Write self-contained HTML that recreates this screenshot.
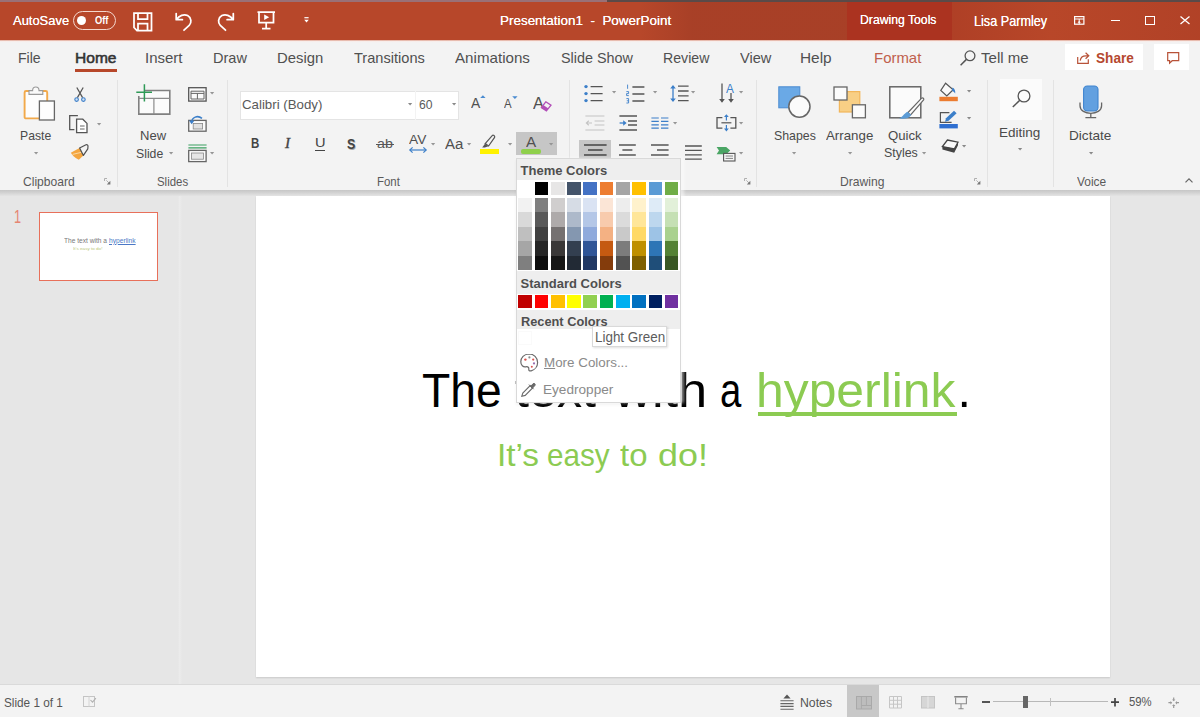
<!DOCTYPE html>
<html><head><meta charset="utf-8"><title>Presentation1 - PowerPoint</title>
<style>
*{margin:0;padding:0;box-sizing:border-box}
html,body{width:1200px;height:717px;overflow:hidden;background:#e6e6e6;font-family:"Liberation Sans",sans-serif;}
.a{position:absolute}
.t{position:absolute;white-space:pre;line-height:1;color:#444;transform-origin:0 0}
svg{overflow:visible}

</style></head><body>
<div class="a" style="left:0px;top:0px;width:1200px;height:40px;background:#b7472a;"></div>
<div class="a" style="left:640px;top:0px;width:210px;height:40px;background:linear-gradient(90deg,rgba(150,50,30,0) 0,rgba(150,55,35,.45) 25%,rgba(150,55,35,.45) 100%);"></div>
<div class="a" style="left:952px;top:0px;width:248px;height:40px;background:linear-gradient(90deg,rgba(160,50,30,.35),rgba(190,70,35,.15) 40%,rgba(160,50,30,.25));"></div>
<div class="a" style="left:847px;top:0px;width:105px;height:40px;background:#ab3320;"></div>
<div class="a" style="left:0px;top:0px;width:607px;height:1.5px;background:#9a7076;"></div>
<div class="a" style="left:607px;top:0px;width:593px;height:1.5px;background:#5a4a48;"></div>
<div class="t" style="left:13.40px;top:14.47px;font-size:13.5px;color:#fff;transform:scaleX(0.9581);text-shadow:0 0 .4px #fff;">AutoSave</div>
<div class="a" style="left:72.5px;top:11px;width:43.5px;height:19px;border:1.3px solid #f4d6cc;border-radius:10px"></div>
<div class="a" style="left:76.7px;top:15.6px;width:9.8px;height:9.8px;border-radius:50%;background:#fff"></div>
<div class="t" style="left:94.60px;top:15.11px;font-size:10.5px;color:#fff;font-weight:700;transform:scaleX(0.8874);">Off</div>
<svg class="a" style="left:133px;top:11.5px;" width="19.5" height="19.5" viewBox="0 0 19.5 19.5"><path d="M1 1h17.5v17.5H4L1 15.5z M5 1v6h9.5V1 M5 18.5v-7h9.5v7" fill="none" stroke="#fff" stroke-width="1.75"/></svg>
<svg class="a" style="left:175px;top:11.5px;" width="18" height="19" viewBox="0 0 18 19"><path d="M1.2 1.5v6.2h6.2 M1.6 7.4C4 3.6 9 1.6 12.6 3.6c4 2.2 4.2 7 1.6 9.8L9 18.2" fill="none" stroke="#fff" stroke-width="1.75" stroke-linecap="round" stroke-linejoin="round"/></svg>
<svg class="a" style="left:216px;top:11.5px;" width="18.5" height="19.5" viewBox="0 0 18.5 19.5"><path d="M17.3 1.5v6.2h-6.2 M16.9 7.4C14.5 3.6 9.5 1.6 5.9 3.6c-4 2.2-4.2 7-1.6 9.8l5.2 4.8" fill="none" stroke="#fff" stroke-width="1.75" stroke-linecap="round" stroke-linejoin="round"/></svg>
<svg class="a" style="left:257px;top:11px;" width="18.5" height="19" viewBox="0 0 18.5 19"><path d="M0.5 1h17.5 M2 1v10.5h14.5V1 M9.2 11.5v5.5 M5 17.5h8.5" fill="none" stroke="#fff" stroke-width="1.75"/><path d="M7.2 3.6l5 2.7-5 2.7z" fill="#fff"/></svg>
<svg class="a" style="left:303.8px;top:16.6px;" width="5" height="6" viewBox="0 0 5 6"><path d="M0.4 0.7h4.2" stroke="#fff" stroke-width="1.2"/><path d="M0.200 2.700l2.300 2.700 2.300-2.700z" fill="#fff"/></svg>
<div class="t" style="left:499.80px;top:13.66px;font-size:13.4px;color:#fff;transform:scaleX(1.0040);text-shadow:0 0 .3px #fff;">Presentation1  -  PowerPoint</div>
<div class="t" style="left:859.84px;top:14.25px;font-size:12.7px;color:#fff;transform:scaleX(0.9625);text-shadow:0 0 .3px #fff;">Drawing Tools</div>
<div class="t" style="left:974.11px;top:14.28px;font-size:14.2px;color:#fff;transform:scaleX(0.8913);text-shadow:0 0 .5px #fff;">Lisa Parmley</div>
<svg class="a" style="left:1074px;top:16px;" width="10.5" height="9" viewBox="0 0 10.5 9"><rect x="0.6" y="0.6" width="9.3" height="7.6" fill="none" stroke="#fff" stroke-width="1.2"/><path d="M0.6 3h9.3 M5.2 3v5.2" stroke="#fff" stroke-width="1"/><path d="M3.6 6.8l1.6-2 1.6 2z" fill="#fff"/></svg>
<div class="a" style="left:1110.5px;top:19.6px;width:9.5px;height:1.2px;background:#fff;"></div>
<div class="a" style="left:1145px;top:16px;width:9.6px;height:8.8px;border:1.3px solid #fff"></div>
<svg class="a" style="left:1180px;top:16.2px;" width="10" height="8.4" viewBox="0 0 10 8.4"><path d="M0.5 0.5l9 7.4 M9.5 0.5l-9 7.4" stroke="#fff" stroke-width="1.3"/></svg>
<div class="a" style="left:0px;top:40px;width:1200px;height:35px;background:#f3f3f3;"></div>
<div class="a" style="left:0px;top:39.6px;width:1200px;height:3px;background:linear-gradient(#d9917c,#f8ebe7 35%,#f5f1f1 70%,#f3f3f3);"></div>
<div class="t" style="left:17.75px;top:50.57px;font-size:14.8px;color:#505050;transform:scaleX(0.9508);">File</div>
<div class="t" style="left:74.75px;top:50.57px;font-size:14.8px;color:#333;transform:scaleX(1.0512);-webkit-text-stroke:.55px #333;">Home</div>
<div class="a" style="left:75.3px;top:68.6px;width:41.4px;height:3px;background:#b7472a;"></div>
<div class="t" style="left:144.99px;top:50.57px;font-size:14.8px;color:#505050;transform:scaleX(1.0141);">Insert</div>
<div class="t" style="left:212.82px;top:50.57px;font-size:14.8px;color:#505050;transform:scaleX(0.9810);">Draw</div>
<div class="t" style="left:276.50px;top:50.57px;font-size:14.8px;color:#505050;transform:scaleX(1.0038);">Design</div>
<div class="t" style="left:353.80px;top:50.57px;font-size:14.8px;color:#505050;transform:scaleX(0.9857);">Transitions</div>
<div class="t" style="left:455.00px;top:50.57px;font-size:14.8px;color:#505050;transform:scaleX(1.0234);">Animations</div>
<div class="t" style="left:560.80px;top:50.57px;font-size:14.8px;color:#505050;transform:scaleX(0.9712);">Slide Show</div>
<div class="t" style="left:662.84px;top:50.57px;font-size:14.8px;color:#505050;transform:scaleX(0.9555);">Review</div>
<div class="t" style="left:739.50px;top:50.57px;font-size:14.8px;color:#505050;transform:scaleX(0.9870);">View</div>
<div class="t" style="left:799.76px;top:50.57px;font-size:14.8px;color:#505050;transform:scaleX(1.0410);">Help</div>
<div class="t" style="left:873.99px;top:50.57px;font-size:14.8px;color:#c0604c;transform:scaleX(1.0098);">Format</div>
<svg class="a" style="left:959.5px;top:50px;" width="16" height="16" viewBox="0 0 16 16"><circle cx="10" cy="5.8" r="4.9" fill="none" stroke="#555" stroke-width="1.3"/><path d="M6.4 9.4L0.6 15.2" stroke="#555" stroke-width="1.5"/></svg>
<div class="t" style="left:981.00px;top:50.57px;font-size:14.8px;color:#505050;transform:scaleX(1.0163);">Tell me</div>
<div class="a" style="left:1065px;top:44px;width:78px;height:26px;background:#fff;"></div>
<svg class="a" style="left:1077px;top:52px;" width="13" height="12" viewBox="0 0 13 12"><path d="M0.7 5v6.3h10.6V7.2 M3.2 8.6c0.4-3 2.6-4.8 5.6-4.8h2.6 M8.6 0.8l3.2 3-3.2 3" fill="none" stroke="#b85238" stroke-width="1.2"/></svg>
<div class="t" style="left:1096.00px;top:50.57px;font-size:14.8px;color:#b5492f;font-weight:700;transform:scaleX(0.9194);">Share</div>
<div class="a" style="left:1154px;top:44px;width:34.5px;height:26px;background:#fff;"></div>
<svg class="a" style="left:1167px;top:51.5px;" width="12.5" height="12" viewBox="0 0 12.5 12"><path d="M0.7 0.7h11v8H5.2L2.6 11.2V8.7H0.7z" fill="none" stroke="#b85238" stroke-width="1.2"/></svg>
<div class="a" style="left:0px;top:75px;width:1200px;height:115px;background:#f3f3f3;"></div>
<div class="a" style="left:0px;top:190px;width:1200px;height:6px;background:linear-gradient(#c6c6c6,#d4d4d4 50%,#e4e4e4);"></div>
<div class="a" style="left:117px;top:80px;width:1px;height:107px;background:#e3e3e3;"></div>
<div class="a" style="left:227px;top:80px;width:1px;height:107px;background:#e3e3e3;"></div>
<div class="a" style="left:569px;top:80px;width:1px;height:107px;background:#e3e3e3;"></div>
<div class="a" style="left:756px;top:80px;width:1px;height:107px;background:#e3e3e3;"></div>
<div class="a" style="left:987px;top:80px;width:1px;height:107px;background:#e3e3e3;"></div>
<div class="a" style="left:1053px;top:80px;width:1px;height:107px;background:#e3e3e3;"></div>
<svg class="a" style="left:23px;top:85.5px;" width="33" height="35" viewBox="0 0 33 35"><rect x="1.600" y="5" width="22.600" height="27.400" rx="1.500" fill="#fdfdfd" stroke="#f2a94a" stroke-width="1.900"/>
<path d="M6 8.400V4.600h3.600c0-4.800 6.400-4.800 6.400 0h3.800v3.800z" fill="#fafafa" stroke="#9a9a9a" stroke-width="1.100"/>
<rect x="16.400" y="15" width="15" height="19" fill="#fdfdfd" stroke="#666" stroke-width="1.300"/></svg>
<div class="t" style="left:20.33px;top:129.63px;font-size:12.6px;color:#4a4a4a;transform:scaleX(0.9680);">Paste</div>
<svg class="a" style="left:33.9px;top:152.4px;" width="4.2" height="2.6" viewBox="0 0 4.2 2.6"><path d="M0 0h4.2L2.1 2.5z" fill="#959595"/></svg>
<svg class="a" style="left:73.5px;top:87px;" width="12" height="16" viewBox="0 0 12 16"><path d="M2.800 0.500L8.600 10.600 M9.200 0.500L3.400 10.600" stroke="#555" stroke-width="1.250" fill="none"/>
<circle cx="2.600" cy="12.600" r="1.800" fill="#cfe0f4" stroke="#3c7fc9" stroke-width="1.100"/><circle cx="9.400" cy="12.600" r="1.800" fill="#cfe0f4" stroke="#3c7fc9" stroke-width="1.100"/></svg>
<svg class="a" style="left:69px;top:114.5px;" width="19" height="18.5" viewBox="0 0 19 18.5"><path d="M5.4 14.6H0.7V0.7h8.2" fill="none" stroke="#555" stroke-width="1.3"/>
<path d="M7.6 4.2h6.2l4.2 4.2v9.3H7.6z" fill="#fff" stroke="#555" stroke-width="1.3"/><path d="M11 11h4.6 M11 14h4.6" stroke="#666" stroke-width="1"/></svg>
<svg class="a" style="left:96.60000000000001px;top:122.5px;" width="4.2" height="2.6" viewBox="0 0 4.2 2.6"><path d="M0 0h4.2L2.1 2.5z" fill="#959595"/></svg>
<svg class="a" style="left:70px;top:144px;" width="19" height="17" viewBox="0 0 19 17"><path d="M0.8 8.8L10 3.8l3.400 7.600-4.600 4.400C5 14 2 11 0.800 8.800z" fill="#f4a640"/><path d="M2.600 10.400l9.400-2.200" stroke="#fbd9a4" stroke-width="1"/>
<path d="M9.600 4l6.400-3.200c1.200-0.400 2 0.400 2 1.400l-0.200 2.600-4.400 6.600z" fill="#f3f3f3" stroke="#505050" stroke-width="1.200" stroke-linejoin="round"/></svg>
<div class="t" style="left:23.00px;top:175.80px;font-size:12.4px;color:#5a5a5a;transform:scaleX(0.9747);">Clipboard</div>
<svg class="a" style="left:103.8px;top:177.8px;" width="7" height="7" viewBox="0 0 7 7"><path d="M0.500 3V0.500h2.500 M2.400 2.400l3.400 3.400" fill="none" stroke="#a8a8a8" stroke-width="0.900"/><path d="M6.400 2.800v3.600H2.800z" fill="#777"/></svg>
<svg class="a" style="left:136px;top:83.5px;" width="35" height="32" viewBox="0 0 35 32"><path d="M8.400 6.500h25.400v23.600H2.800V12" fill="#fbfbfb" stroke="#808080" stroke-width="1.600"/>
<path d="M2.800 14.400h31 M17.900 14.400v15.600" stroke="#8c8c8c" stroke-width="1.200"/>
<path d="M8.400 0.200v17.400 M0.300 8.300h15.700" stroke="#2e9a57" stroke-width="1.500"/></svg>
<div class="t" style="left:140.36px;top:129.63px;font-size:12.6px;color:#4a4a4a;transform:scaleX(1.0359);">New</div>
<div class="t" style="left:136.00px;top:147.63px;font-size:12.6px;color:#4a4a4a;transform:scaleX(0.9714);">Slide</div>
<svg class="a" style="left:168.6px;top:152.1px;" width="4.2" height="2.6" viewBox="0 0 4.2 2.6"><path d="M0 0h4.2L2.1 2.5z" fill="#959595"/></svg>
<div class="t" style="left:156.50px;top:175.80px;font-size:12.4px;color:#5a5a5a;transform:scaleX(0.9210);">Slides</div>
<svg class="a" style="left:188px;top:86.5px;" width="19" height="15" viewBox="0 0 19 15"><rect x="0.7" y="0.7" width="17.4" height="13.4" fill="#fbfbfb" stroke="#555" stroke-width="1.3"/><path d="M3 4.2h13 M3 6.4h13 M9.4 6.4v5.6 M3 12h13 M3 4.2v7.8 M16 4.2v7.8" stroke="#666" stroke-width="1" fill="none"/></svg>
<svg class="a" style="left:210.20000000000002px;top:92.10000000000001px;" width="4.2" height="2.6" viewBox="0 0 4.2 2.6"><path d="M0 0h4.2L2.1 2.5z" fill="#959595"/></svg>
<svg class="a" style="left:188px;top:113.5px;" width="19" height="18" viewBox="0 0 19 18"><rect x="0.7" y="6.4" width="17.4" height="10.8" fill="#fbfbfb" stroke="#666" stroke-width="1.3"/><rect x="5.2" y="9.4" width="9.4" height="5.6" fill="#e1e1e1" stroke="#888" stroke-width="0.8"/>
<path d="M3.6 8.4C3.8 3.2 9.6 0.8 14 4.4" fill="none" stroke="#3c7fc9" stroke-width="1.5"/><path d="M1 6.6l2.6 3.6 2.8-3.4z" fill="#3c7fc9"/></svg>
<svg class="a" style="left:188px;top:144px;" width="19" height="18.5" viewBox="0 0 19 18.5"><path d="M0.4 1h18.2 M0.4 3.8h18.2" stroke="#3aa060" stroke-width="1.2"/><rect x="0.7" y="6.4" width="17.4" height="11.2" fill="#fbfbfb" stroke="#666" stroke-width="1.3"/><rect x="3.4" y="9" width="12" height="6.2" fill="#e6e6e6" stroke="#888" stroke-width="0.8"/></svg>
<svg class="a" style="left:210.20000000000002px;top:152.1px;" width="4.2" height="2.6" viewBox="0 0 4.2 2.6"><path d="M0 0h4.2L2.1 2.5z" fill="#959595"/></svg>
<div class="a" style="left:240px;top:90.5px;width:174.5px;height:29px;background:#fff;border:1px solid #e4e4e4;border-right:0"></div>
<div class="a" style="left:415.5px;top:90.5px;width:43.5px;height:29px;background:#fff;border:1px solid #e4e4e4;border-left:0"></div>
<div class="t" style="left:241.80px;top:98.42px;font-size:13.2px;color:#5a5a5a;transform:scaleX(1.0065);">Calibri (Body)</div>
<svg class="a" style="left:407.9px;top:102.7px;" width="4.2" height="2.6" viewBox="0 0 4.2 2.6"><path d="M0 0h4.2L2.1 2.5z" fill="#888"/></svg>
<div class="t" style="left:418.60px;top:98.42px;font-size:13.2px;color:#5a5a5a;transform:scaleX(0.9209);">60</div>
<svg class="a" style="left:452.29999999999995px;top:102.7px;" width="4.2" height="2.6" viewBox="0 0 4.2 2.6"><path d="M0 0h4.2L2.1 2.5z" fill="#888"/></svg>
<div class="t" style="left:471.00px;top:95.64px;font-size:14.6px;color:#505050;transform:scaleX(0.9500);">A</div>
<svg class="a" style="left:480.4px;top:95.3px;" width="5.8" height="3.2" viewBox="0 0 5.8 3.2"><path d="M0.200 3L2.900 0.200 5.600 3z" fill="#4a8bd0"/></svg>
<div class="t" style="left:503.80px;top:97.84px;font-size:12px;color:#505050;transform:scaleX(0.9500);">A</div>
<svg class="a" style="left:512.4px;top:96px;" width="5.8" height="3.2" viewBox="0 0 5.8 3.2"><path d="M0.200 0.200L2.900 3 5.600 0.200z" fill="#4a8bd0"/></svg>
<div class="t" style="left:533.00px;top:95.01px;font-size:17px;color:#505050;transform:scaleX(0.9583);">A</div>
<svg class="a" style="left:541px;top:101px;" width="11" height="10.5" viewBox="0 0 11 10.5"><path d="M4.8 0.8l5.2 3.4-4.6 5.6-5-3.2z" fill="#f3f3f3" stroke="#b24fb8" stroke-width="1.3"/><path d="M2.6 4.2l4.8 3.2-2 2.4-5-3.2z" fill="#b24fb8"/></svg>
<div class="t" style="left:251.20px;top:135.91px;font-size:14.4px;color:#444;font-weight:700;transform:scaleX(0.8000);">B</div>
<div class="t" style="left:285.03px;top:135.57px;font-size:14.8px;color:#444;font-style:italic;font-family:'Liberation Serif',serif;transform:scaleX(1.0286);-webkit-text-stroke:.35px #444;">I</div>
<div class="t" style="left:314.53px;top:136.29px;font-size:13.6px;color:#444;transform:scaleX(1.0750);">U</div>
<div class="a" style="left:315.2px;top:150px;width:9.4px;height:1.1px;background:#444;"></div>
<div class="t" style="left:347.30px;top:135.70px;font-size:15px;color:#444;font-weight:700;transform:scaleX(0.8300);text-shadow:0.9px 0.7px 0.7px #aaa;">S</div>
<div class="t" style="left:377.40px;top:137.53px;font-size:12.6px;color:#555;transform:scaleX(1.1282);">ab</div>
<div class="a" style="left:376.4px;top:144.2px;width:17.8px;height:1px;background:#555;"></div>
<div class="t" style="left:409.40px;top:133.09px;font-size:13.6px;color:#505050;transform:scaleX(1.0084);">AV</div>
<svg class="a" style="left:409px;top:146.5px;" width="18" height="6" viewBox="0 0 18 6"><path d="M1 3h16" stroke="#3c7fc9" stroke-width="1.2"/><path d="M3.6 0.4L0.8 3l2.8 2.6 M14.4 0.4L17.2 3l-2.8 2.6" fill="none" stroke="#3c7fc9" stroke-width="1.2"/></svg>
<svg class="a" style="left:431.4px;top:142.5px;" width="4.2" height="2.6" viewBox="0 0 4.2 2.6"><path d="M0 0h4.2L2.1 2.5z" fill="#959595"/></svg>
<div class="t" style="left:445.20px;top:136.36px;font-size:15.4px;color:#505050;transform:scaleX(0.9758);">Aa</div>
<svg class="a" style="left:467.2px;top:142.5px;" width="4.2" height="2.6" viewBox="0 0 4.2 2.6"><path d="M0 0h4.2L2.1 2.5z" fill="#959595"/></svg>
<svg class="a" style="left:480px;top:134px;" width="20" height="14" viewBox="0 0 20 14"><path d="M5.2 9.6l7-8c1-1 3 0.4 2.4 1.8l-6 8.6z" fill="#f3f3f3" stroke="#555" stroke-width="1.2"/><path d="M5 9.8l3.4 2.4-3.6 1.2H2.2z" fill="#555"/></svg>
<div class="a" style="left:480.2px;top:148.6px;width:18.4px;height:5px;background:#fff200;"></div>
<svg class="a" style="left:507.5px;top:142.5px;" width="4.2" height="2.6" viewBox="0 0 4.2 2.6"><path d="M0 0h4.2L2.1 2.5z" fill="#959595"/></svg>
<div class="a" style="left:516.4px;top:131.6px;width:41px;height:23.8px;background:#c6c6c6;"></div>
<div class="t" style="left:526.40px;top:134.30px;font-size:15px;color:#505050;transform:scaleX(1.0200);">A</div>
<div class="a" style="left:521.4px;top:148.6px;width:20px;height:5px;background:#8fd04c;border-radius:2px"></div>
<svg class="a" style="left:548.5px;top:142.5px;" width="4.2" height="2.6" viewBox="0 0 4.2 2.6"><path d="M0 0h4.2L2.1 2.5z" fill="#959595"/></svg>
<div class="t" style="left:376.58px;top:175.80px;font-size:12.4px;color:#5a5a5a;transform:scaleX(0.9240);">Font</div>
<svg class="a" style="left:584px;top:84px;" width="20" height="19" viewBox="0 0 20 19"><circle cx="2" cy="2.6" r="1.7" fill="#3c7fc9"/><circle cx="2" cy="9.6" r="1.7" fill="#3c7fc9"/><circle cx="2" cy="16.6" r="1.7" fill="#3c7fc9"/><path d="M6.6 2.6h12 M6.6 9.6h12 M6.6 16.6h12" stroke="#555" stroke-width="1.3"/></svg>
<svg class="a" style="left:611.8px;top:90.9px;" width="4.2" height="2.6" viewBox="0 0 4.2 2.6"><path d="M0 0h4.2L2.1 2.5z" fill="#959595"/></svg>
<svg class="a" style="left:626px;top:83.5px;" width="20" height="20" viewBox="0 0 20 20"><path d="M1.6 0.6v4.2 M0.4 7.6h2.2v2h-2v2h2.2 M0.4 14.6h2.2v4.4H0.4 M0.8 16.8h1.8" stroke="#3c7fc9" stroke-width="0.9" fill="none"/><path d="M6.4 3h12 M6.4 10h12 M6.4 17h12" stroke="#555" stroke-width="1.3"/></svg>
<svg class="a" style="left:653.3px;top:90.9px;" width="4.2" height="2.6" viewBox="0 0 4.2 2.6"><path d="M0 0h4.2L2.1 2.5z" fill="#959595"/></svg>
<svg class="a" style="left:669.5px;top:84px;" width="20" height="19" viewBox="0 0 20 19"><path d="M3 2v15" stroke="#3c7fc9" stroke-width="1.3"/><path d="M0.2 4.4L3 1l2.8 3.4z M0.2 14.6L3 18l2.8-3.4z" fill="#3c7fc9"/><path d="M8 2.2h10.6 M8 7h10.6 M8 11.8h10.6 M8 16.6h10.6" stroke="#555" stroke-width="1.3"/></svg>
<svg class="a" style="left:691.3px;top:90.9px;" width="4.2" height="2.6" viewBox="0 0 4.2 2.6"><path d="M0 0h4.2L2.1 2.5z" fill="#959595"/></svg>
<svg class="a" style="left:718.5px;top:83px;" width="16" height="21" viewBox="0 0 16 21"><path d="M3 0.6v18" stroke="#555" stroke-width="1.3"/><path d="M0.2 16L3 19.8 5.8 16z" fill="#555"/><path d="M12 10v8" stroke="#555" stroke-width="1.3"/><path d="M9.2 16L12 19.8 14.8 16z" fill="#555"/></svg>
<div class="t" style="left:726.40px;top:83.10px;font-size:12.4px;color:#3c7fc9;transform:scaleX(0.9556);">A</div>
<svg class="a" style="left:738.6999999999999px;top:90.9px;" width="4.2" height="2.6" viewBox="0 0 4.2 2.6"><path d="M0 0h4.2L2.1 2.5z" fill="#959595"/></svg>
<svg class="a" style="left:585px;top:114.5px;" width="20" height="16" viewBox="0 0 20 16"><path d="M0.4 1h19 M9.6 6h9.8 M9.6 10h9.8 M0.4 15h19" stroke="#c4c4c4" stroke-width="1.2"/><path d="M7 8H1.6 M3.8 5.8L1.4 8l2.4 2.2" stroke="#c4c4c4" stroke-width="1.2" fill="none"/></svg>
<svg class="a" style="left:619px;top:114.5px;" width="19" height="16" viewBox="0 0 19 16"><path d="M0.4 1h17.6 M9 6h9 M9 10h9 M0.4 15h17.6" stroke="#555" stroke-width="1.3"/><path d="M0.6 8h5" stroke="#3c7fc9" stroke-width="1.3"/><path d="M4.2 5.2L7.6 8 4.2 10.8z" fill="#3c7fc9"/></svg>
<svg class="a" style="left:651px;top:117px;" width="18" height="12" viewBox="0 0 18 12"><path d="M0.4 1h7.4 M0.4 4.4h7.4 M0.4 7.8h7.4 M0.4 11.2h7.4 M10 1h7.4 M10 4.4h7.4 M10 7.8h7.4 M10 11.2h7.4" stroke="#3c7fc9" stroke-width="1.2"/></svg>
<svg class="a" style="left:673.4px;top:121.9px;" width="4.2" height="2.6" viewBox="0 0 4.2 2.6"><path d="M0 0h4.2L2.1 2.5z" fill="#959595"/></svg>
<svg class="a" style="left:715.5px;top:114px;" width="21" height="17.5" viewBox="0 0 21 17.5"><path d="M6.4 3.6H1v10.6h5.4 M14.4 3.6h5.4v10.6h-5.4" fill="none" stroke="#555" stroke-width="1.3"/><path d="M5.4 8.8h10" stroke="#555" stroke-width="1.2"/><path d="M10.4 1.6v5 M10.4 11v5" stroke="#3c7fc9" stroke-width="1.2"/><path d="M8 3L10.4 0.2 12.8 3z M8 14.6l2.4 2.8 2.4-2.8z" fill="#3c7fc9"/></svg>
<svg class="a" style="left:738.6999999999999px;top:121.9px;" width="4.2" height="2.6" viewBox="0 0 4.2 2.6"><path d="M0 0h4.2L2.1 2.5z" fill="#959595"/></svg>
<div class="a" style="left:579px;top:140px;width:32px;height:18px;background:#c6c6c6;"></div>
<svg class="a" style="left:584.3px;top:143.5px;" width="30" height="22" viewBox="0 0 30 22"><path d="M0 1H22.6 M4 6H18.6 M0 11H22.6" stroke="#444" stroke-width="1.4" fill="none"/></svg>
<svg class="a" style="left:619.4px;top:143.5px;" width="30" height="22" viewBox="0 0 30 22"><path d="M0 1H16.8 M3.4 6H13.4 M0 11H16.8" stroke="#555" stroke-width="1.3" fill="none"/></svg>
<svg class="a" style="left:651.2px;top:143.5px;" width="30" height="22" viewBox="0 0 30 22"><path d="M0 1H17.6 M6 6H17.6 M0 11H17.6" stroke="#555" stroke-width="1.3" fill="none"/></svg>
<svg class="a" style="left:684.7px;top:144.5px;" width="30" height="22" viewBox="0 0 30 22"><path d="M0 1H16.8 M0 5.4H16.8 M0 9.8H16.8 M0 14.2H16.8" stroke="#555" stroke-width="1.3" fill="none"/></svg>
<svg class="a" style="left:715.5px;top:145.5px;" width="20" height="16" viewBox="0 0 20 16"><path d="M0.6 1h9.6l4 3.6-4 3.6H0.6l2.4-3.6z" fill="#4aa564"/><rect x="7.6" y="7.4" width="11.4" height="7.6" fill="#f6f6f6" stroke="#555" stroke-width="1.1"/><path d="M9.6 10h7.4 M9.6 12.4h7.4" stroke="#777" stroke-width="0.9"/></svg>
<svg class="a" style="left:738.6999999999999px;top:151.9px;" width="4.2" height="2.6" viewBox="0 0 4.2 2.6"><path d="M0 0h4.2L2.1 2.5z" fill="#959595"/></svg>
<svg class="a" style="left:743.5px;top:177.60000000000002px;" width="7" height="7" viewBox="0 0 7 7"><path d="M0.500 3V0.500h2.500 M2.400 2.400l3.400 3.400" fill="none" stroke="#a8a8a8" stroke-width="0.900"/><path d="M6.400 2.800v3.600H2.800z" fill="#777"/></svg>
<svg class="a" style="left:778px;top:85.5px;" width="34" height="33" viewBox="0 0 34 33"><rect x="0.8" y="0.8" width="21" height="21" fill="#6aa9e6" stroke="#4a8bd0" stroke-width="1"/><circle cx="21.4" cy="20.6" r="10.6" fill="#fbfbfb" stroke="#666" stroke-width="1.5"/></svg>
<div class="t" style="left:774.00px;top:129.53px;font-size:12.6px;color:#4a4a4a;transform:scaleX(0.9808);">Shapes</div>
<svg class="a" style="left:792.3px;top:151.9px;" width="4.2" height="2.6" viewBox="0 0 4.2 2.6"><path d="M0 0h4.2L2.1 2.5z" fill="#959595"/></svg>
<svg class="a" style="left:833px;top:85.5px;" width="34" height="33" viewBox="0 0 34 33"><rect x="6.4" y="5.6" width="20.4" height="20.4" fill="#f8cf85" stroke="#f2b65a" stroke-width="1.2"/><rect x="1" y="1" width="13" height="13" fill="#fbfbfb" stroke="#666" stroke-width="1.3"/><rect x="19.4" y="18.8" width="13" height="13" fill="#fbfbfb" stroke="#666" stroke-width="1.3"/></svg>
<div class="t" style="left:826.20px;top:129.53px;font-size:12.6px;color:#4a4a4a;transform:scaleX(1.0558);">Arrange</div>
<svg class="a" style="left:847.9px;top:151.9px;" width="4.2" height="2.6" viewBox="0 0 4.2 2.6"><path d="M0 0h4.2L2.1 2.5z" fill="#959595"/></svg>
<svg class="a" style="left:889px;top:85.5px;" width="36" height="36" viewBox="0 0 36 36"><rect x="0.800" y="0.800" width="31" height="31" fill="#fbfbfb" stroke="#666" stroke-width="1.500"/><path d="M32.600 12.200c1.200-1 2.800 0.400 2 1.800L21.600 29l-2.800-2.200z" fill="#fbfbfb" stroke="#666" stroke-width="1.200"/><path d="M18.400 25.800l3.800 3c-1.600 3.600-7.200 5-12.200 3.400 3.800-0.800 4.800-4.600 8.400-6.400z" fill="#5b9bd5"/></svg>
<div class="t" style="left:888.00px;top:129.53px;font-size:12.6px;color:#4a4a4a;transform:scaleX(1.0458);">Quick</div>
<div class="t" style="left:883.90px;top:147.33px;font-size:12.6px;color:#4a4a4a;transform:scaleX(0.9854);">Styles</div>
<svg class="a" style="left:922.1px;top:151.9px;" width="4.2" height="2.6" viewBox="0 0 4.2 2.6"><path d="M0 0h4.2L2.1 2.5z" fill="#959595"/></svg>
<div class="t" style="left:840.22px;top:175.80px;font-size:12.4px;color:#5a5a5a;transform:scaleX(0.9763);">Drawing</div>
<svg class="a" style="left:939px;top:82px;" width="20" height="20" viewBox="0 0 20 20"><path d="M6.6 1.2l7.6 6.6-6.4 6.2-6-5.6z" fill="#f9f9f9" stroke="#555" stroke-width="1.2"/><path d="M13.6 5.4c2 1.2 3 3.400 2.600 6.200-1.400-2.200-2.600-2.400-3.400-3.400z" fill="#3c7fc9"/><rect x="0.400" y="14.800" width="18.400" height="4.400" fill="#ec7c30"/></svg>
<svg class="a" style="left:967.4px;top:89.9px;" width="4.2" height="2.6" viewBox="0 0 4.2 2.6"><path d="M0 0h4.2L2.1 2.5z" fill="#888"/></svg>
<svg class="a" style="left:939px;top:109.5px;" width="20" height="19" viewBox="0 0 20 19"><path d="M12.600 12.400H1.400V2.600h9" fill="none" stroke="#555" stroke-width="1.200"/><path d="M6 11.800l1-3.600L15 0.800l2.600 2.400-8 7.600z" fill="#3c7fc9"/><rect x="0.400" y="14" width="18.400" height="4.400" fill="#2f6fd0"/></svg>
<svg class="a" style="left:967.4px;top:116.9px;" width="4.2" height="2.6" viewBox="0 0 4.2 2.6"><path d="M0 0h4.2L2.1 2.5z" fill="#888"/></svg>
<svg class="a" style="left:940.5px;top:139px;" width="18" height="14.5" viewBox="0 0 18 14.5"><path d="M6.400 1L17 3.200l-3.600 6.600L1.400 7.600z" fill="#f9f9f9" stroke="#444" stroke-width="1.300"/><path d="M1.400 7.600v3l11.800 3.200 0.200-4z M13.400 9.800L17 3.200v3l-3.800 7.600z" fill="#444"/></svg>
<svg class="a" style="left:962.3px;top:144.70000000000002px;" width="4.2" height="2.6" viewBox="0 0 4.2 2.6"><path d="M0 0h4.2L2.1 2.5z" fill="#888"/></svg>
<svg class="a" style="left:974.3px;top:177.8px;" width="7" height="7" viewBox="0 0 7 7"><path d="M0.500 3V0.500h2.500 M2.400 2.400l3.400 3.400" fill="none" stroke="#a8a8a8" stroke-width="0.900"/><path d="M6.400 2.800v3.600H2.800z" fill="#777"/></svg>
<div class="a" style="left:1000px;top:79px;width:41.5px;height:40.5px;background:#fbfbfb;"></div>
<svg class="a" style="left:1011.5px;top:89px;" width="19" height="19" viewBox="0 0 19 19"><circle cx="12" cy="7" r="5.900" fill="none" stroke="#555" stroke-width="1.300"/><path d="M7.800 11.200L0.800 18" stroke="#555" stroke-width="1.500"/></svg>
<div class="t" style="left:999.23px;top:126.53px;font-size:12.6px;color:#4a4a4a;transform:scaleX(1.0719);">Editing</div>
<svg class="a" style="left:1017.9px;top:147.70000000000002px;" width="4.2" height="2.6" viewBox="0 0 4.2 2.6"><path d="M0 0h4.2L2.1 2.5z" fill="#888"/></svg>
<svg class="a" style="left:1079px;top:85px;" width="24" height="34" viewBox="0 0 24 34"><rect x="4.600" y="1" width="14.400" height="25" rx="3.600" fill="#62a0e0" stroke="#3f84cf" stroke-width="1.100"/><path d="M1 17.400v3.400c0 10 21.600 10 21.600 0v-3.400" fill="none" stroke="#666" stroke-width="1.300"/><path d="M11.800 28.400v4 M6.400 32.600h10.800" stroke="#666" stroke-width="1.300"/></svg>
<div class="t" style="left:1069.22px;top:129.63px;font-size:12.6px;color:#4a4a4a;transform:scaleX(1.0814);">Dictate</div>
<svg class="a" style="left:1088.6000000000001px;top:151.9px;" width="4.2" height="2.6" viewBox="0 0 4.2 2.6"><path d="M0 0h4.2L2.1 2.5z" fill="#888"/></svg>
<div class="t" style="left:1076.50px;top:175.80px;font-size:12.4px;color:#5a5a5a;transform:scaleX(0.9632);">Voice</div>
<svg class="a" style="left:1184.5px;top:178px;" width="8" height="5" viewBox="0 0 8 5"><path d="M0.500 4.400L4 0.800l3.500 3.600" fill="none" stroke="#666" stroke-width="1.200"/></svg>
<div class="a" style="left:177.5px;top:196px;width:4.5px;height:488px;background:linear-gradient(90deg,#e6e6e6,#ebebeb 40%,#e9e9e9 70%,#e6e6e6);"></div>
<div class="t" style="left:13.71px;top:207.92px;font-size:18.4px;color:#e58572;transform:scaleX(0.6889);">1</div>
<div class="a" style="left:39.2px;top:211.7px;width:119.2px;height:69.2px;background:#fff;border:1.3px solid #e8705a"></div>
<div class="t" style="left:63.80px;top:236.77px;font-size:7.6px;color:#777;transform:scaleX(0.8692);">The text with a</div>
<div class="t" style="left:108.80px;top:236.77px;font-size:7.6px;color:#4b78c6;transform:scaleX(0.8760);text-decoration:underline;">hyperlink</div>
<div class="t" style="left:72.80px;top:247.07px;font-size:4.4px;color:#b9c77a;transform:scaleX(1.0425);">It’s easy to do!</div>
<div class="a" style="left:256px;top:196px;width:854px;height:480.6px;background:#fff;box-shadow:0 1px 1.5px rgba(0,0,0,.12)"></div>
<div class="t" style="left:421.64px;top:365.62px;font-size:48.4px;color:#000;transform:scaleX(0.9556);">The</div>
<div class="t" style="left:515.40px;top:365.62px;font-size:48.4px;color:#000;transform:scaleX(1.0388);">text</div>
<div class="t" style="left:613.68px;top:365.62px;font-size:48.4px;color:#000;transform:scaleX(1.0839);">with</div>
<div class="t" style="left:719.82px;top:365.62px;font-size:48.4px;color:#000;transform:scaleX(0.7920);">a</div>
<div class="t" style="left:755.91px;top:365.62px;font-size:48.4px;color:#8ccb52;transform:scaleX(1.0300);">hyperlink</div>
<div class="a" style="left:758.4px;top:412px;width:198.6px;height:3.7px;background:#8ccb52;"></div>
<div class="t" style="left:957.40px;top:365.62px;font-size:48.4px;color:#000;">.</div>
<div class="t" style="left:496.67px;top:440.42px;font-size:31.4px;color:#8ccb52;transform:scaleX(1.0638);">It’s</div>
<div class="t" style="left:547.06px;top:440.42px;font-size:31.4px;color:#8ccb52;transform:scaleX(0.9450);">easy</div>
<div class="t" style="left:620.00px;top:440.42px;font-size:31.4px;color:#8ccb52;transform:scaleX(1.0497);">to</div>
<div class="t" style="left:657.66px;top:440.42px;font-size:31.4px;color:#8ccb52;transform:scaleX(1.1449);">do!</div>
<div class="a" style="left:516px;top:157.5px;width:165px;height:245.3px;background:#fff;border:1px solid #d9d9d9;box-shadow:3px 0 3px rgba(255,255,255,.55),0 2px 3px rgba(0,0,0,.05)"></div>
<div class="a" style="left:517px;top:158.5px;width:163px;height:21px;background:#eeeeee;"></div>
<div class="t" style="left:520.60px;top:163.79px;font-size:13px;color:#4f4f4f;font-weight:700;">Theme Colors</div>
<div class="a" style="left:518.4px;top:181.5px;width:13.6px;height:13px;background:#ffffff;"></div>
<div class="a" style="left:518.4px;top:197.7px;width:13.6px;height:14.4px;background:#f2f2f2;"></div>
<div class="a" style="left:518.4px;top:212.1px;width:13.6px;height:14.5px;background:#d9d9d9;"></div>
<div class="a" style="left:518.4px;top:226.6px;width:13.6px;height:14.5px;background:#bfbfbf;"></div>
<div class="a" style="left:518.4px;top:241.1px;width:13.6px;height:14.5px;background:#a6a6a6;"></div>
<div class="a" style="left:518.4px;top:255.6px;width:13.6px;height:14.7px;background:#7f7f7f;"></div>
<div class="a" style="left:534.67px;top:181.5px;width:13.6px;height:13px;background:#000000;"></div>
<div class="a" style="left:534.67px;top:197.7px;width:13.6px;height:14.4px;background:#7f7f7f;"></div>
<div class="a" style="left:534.67px;top:212.1px;width:13.6px;height:14.5px;background:#595959;"></div>
<div class="a" style="left:534.67px;top:226.6px;width:13.6px;height:14.5px;background:#404040;"></div>
<div class="a" style="left:534.67px;top:241.1px;width:13.6px;height:14.5px;background:#262626;"></div>
<div class="a" style="left:534.67px;top:255.6px;width:13.6px;height:14.7px;background:#0d0d0d;"></div>
<div class="a" style="left:550.94px;top:181.5px;width:13.6px;height:13px;background:#e7e6e6;"></div>
<div class="a" style="left:550.94px;top:197.7px;width:13.6px;height:14.4px;background:#d0cece;"></div>
<div class="a" style="left:550.94px;top:212.1px;width:13.6px;height:14.5px;background:#aeaaaa;"></div>
<div class="a" style="left:550.94px;top:226.6px;width:13.6px;height:14.5px;background:#757171;"></div>
<div class="a" style="left:550.94px;top:241.1px;width:13.6px;height:14.5px;background:#3a3838;"></div>
<div class="a" style="left:550.94px;top:255.6px;width:13.6px;height:14.7px;background:#161616;"></div>
<div class="a" style="left:567.21px;top:181.5px;width:13.6px;height:13px;background:#44546a;"></div>
<div class="a" style="left:567.21px;top:197.7px;width:13.6px;height:14.4px;background:#d6dce5;"></div>
<div class="a" style="left:567.21px;top:212.1px;width:13.6px;height:14.5px;background:#adb9ca;"></div>
<div class="a" style="left:567.21px;top:226.6px;width:13.6px;height:14.5px;background:#8497b0;"></div>
<div class="a" style="left:567.21px;top:241.1px;width:13.6px;height:14.5px;background:#333f50;"></div>
<div class="a" style="left:567.21px;top:255.6px;width:13.6px;height:14.7px;background:#222a35;"></div>
<div class="a" style="left:583.48px;top:181.5px;width:13.6px;height:13px;background:#4472c4;"></div>
<div class="a" style="left:583.48px;top:197.7px;width:13.6px;height:14.4px;background:#dae3f3;"></div>
<div class="a" style="left:583.48px;top:212.1px;width:13.6px;height:14.5px;background:#b4c7e7;"></div>
<div class="a" style="left:583.48px;top:226.6px;width:13.6px;height:14.5px;background:#8faadc;"></div>
<div class="a" style="left:583.48px;top:241.1px;width:13.6px;height:14.5px;background:#2f5597;"></div>
<div class="a" style="left:583.48px;top:255.6px;width:13.6px;height:14.7px;background:#203864;"></div>
<div class="a" style="left:599.75px;top:181.5px;width:13.6px;height:13px;background:#ed7d31;"></div>
<div class="a" style="left:599.75px;top:197.7px;width:13.6px;height:14.4px;background:#fbe5d6;"></div>
<div class="a" style="left:599.75px;top:212.1px;width:13.6px;height:14.5px;background:#f8cbad;"></div>
<div class="a" style="left:599.75px;top:226.6px;width:13.6px;height:14.5px;background:#f4b183;"></div>
<div class="a" style="left:599.75px;top:241.1px;width:13.6px;height:14.5px;background:#c55a11;"></div>
<div class="a" style="left:599.75px;top:255.6px;width:13.6px;height:14.7px;background:#843c0c;"></div>
<div class="a" style="left:616.02px;top:181.5px;width:13.6px;height:13px;background:#a5a5a5;"></div>
<div class="a" style="left:616.02px;top:197.7px;width:13.6px;height:14.4px;background:#ededed;"></div>
<div class="a" style="left:616.02px;top:212.1px;width:13.6px;height:14.5px;background:#dbdbdb;"></div>
<div class="a" style="left:616.02px;top:226.6px;width:13.6px;height:14.5px;background:#c9c9c9;"></div>
<div class="a" style="left:616.02px;top:241.1px;width:13.6px;height:14.5px;background:#7c7c7c;"></div>
<div class="a" style="left:616.02px;top:255.6px;width:13.6px;height:14.7px;background:#525252;"></div>
<div class="a" style="left:632.29px;top:181.5px;width:13.6px;height:13px;background:#ffc000;"></div>
<div class="a" style="left:632.29px;top:197.7px;width:13.6px;height:14.4px;background:#fff2cc;"></div>
<div class="a" style="left:632.29px;top:212.1px;width:13.6px;height:14.5px;background:#ffe699;"></div>
<div class="a" style="left:632.29px;top:226.6px;width:13.6px;height:14.5px;background:#ffd966;"></div>
<div class="a" style="left:632.29px;top:241.1px;width:13.6px;height:14.5px;background:#bf9000;"></div>
<div class="a" style="left:632.29px;top:255.6px;width:13.6px;height:14.7px;background:#7f6000;"></div>
<div class="a" style="left:648.56px;top:181.5px;width:13.6px;height:13px;background:#5b9bd5;"></div>
<div class="a" style="left:648.56px;top:197.7px;width:13.6px;height:14.4px;background:#deebf7;"></div>
<div class="a" style="left:648.56px;top:212.1px;width:13.6px;height:14.5px;background:#bdd7ee;"></div>
<div class="a" style="left:648.56px;top:226.6px;width:13.6px;height:14.5px;background:#9dc3e6;"></div>
<div class="a" style="left:648.56px;top:241.1px;width:13.6px;height:14.5px;background:#2e75b6;"></div>
<div class="a" style="left:648.56px;top:255.6px;width:13.6px;height:14.7px;background:#1f4e79;"></div>
<div class="a" style="left:664.83px;top:181.5px;width:13.6px;height:13px;background:#70ad47;"></div>
<div class="a" style="left:664.83px;top:197.7px;width:13.6px;height:14.4px;background:#e2f0d9;"></div>
<div class="a" style="left:664.83px;top:212.1px;width:13.6px;height:14.5px;background:#c5e0b4;"></div>
<div class="a" style="left:664.83px;top:226.6px;width:13.6px;height:14.5px;background:#a9d18e;"></div>
<div class="a" style="left:664.83px;top:241.1px;width:13.6px;height:14.5px;background:#548235;"></div>
<div class="a" style="left:664.83px;top:255.6px;width:13.6px;height:14.7px;background:#385723;"></div>
<div class="a" style="left:517px;top:270.5px;width:163px;height:23px;background:#eeeeee;"></div>
<div class="t" style="left:520.60px;top:277.09px;font-size:13px;color:#4f4f4f;font-weight:700;">Standard Colors</div>
<div class="a" style="left:518.4px;top:295.1px;width:13.6px;height:13px;background:#c00000;"></div>
<div class="a" style="left:534.67px;top:295.1px;width:13.6px;height:13px;background:#ff0000;"></div>
<div class="a" style="left:550.94px;top:295.1px;width:13.6px;height:13px;background:#ffc000;"></div>
<div class="a" style="left:567.21px;top:295.1px;width:13.6px;height:13px;background:#ffff00;"></div>
<div class="a" style="left:583.48px;top:295.1px;width:13.6px;height:13px;background:#92d050;"></div>
<div class="a" style="left:599.75px;top:295.1px;width:13.6px;height:13px;background:#00b050;"></div>
<div class="a" style="left:616.02px;top:295.1px;width:13.6px;height:13px;background:#00b0f0;"></div>
<div class="a" style="left:632.29px;top:295.1px;width:13.6px;height:13px;background:#0070c0;"></div>
<div class="a" style="left:648.56px;top:295.1px;width:13.6px;height:13px;background:#002060;"></div>
<div class="a" style="left:664.83px;top:295.1px;width:13.6px;height:13px;background:#7030a0;"></div>
<div class="a" style="left:517px;top:310.3px;width:163px;height:18.5px;background:#eeeeee;"></div>
<div class="t" style="left:520.60px;top:314.59px;font-size:13px;color:#4f4f4f;font-weight:700;transform:scaleX(0.9829);">Recent Colors</div>
<div class="a" style="left:518.4px;top:331px;width:13.6px;height:13.6px;background:#fff;border:1px solid #fafafa"></div>
<div class="a" style="left:592px;top:326px;width:74.5px;height:21.2px;background:#fff;border:1px solid #d9d9d9;box-shadow:1px 1px 2px rgba(0,0,0,.12)"></div>
<div class="t" style="left:594.64px;top:330.45px;font-size:14px;color:#5c5c5c;transform:scaleX(0.9584);">Light Green</div>
<svg class="a" style="left:520px;top:352.5px;" width="18.5" height="18.5" viewBox="0 0 18.5 18.5"><path d="M9 1C4 1 0.8 4.600 0.800 8.800c0 3.600 2.400 5.400 5 5 2.400-0.400 3.200 0.800 3 2.400-0.200 1.400 0.800 2 2.400 1.600 3.600-1 6.400-4.400 6.400-8.400C17.600 4.400 13.800 1 9 1z" fill="none" stroke="#6a6a6a" stroke-width="1.200"/><circle cx="5.400" cy="6.600" r="1.200" fill="#d9534f"/><circle cx="9.400" cy="4.400" r="1.100" fill="#8a8a8a"/><circle cx="13.200" cy="6.600" r="1.100" fill="#d9534f"/><circle cx="14" cy="10.400" r="1.100" fill="#9a6fb0"/><circle cx="11.800" cy="13.800" r="1" fill="#d9534f"/></svg>
<div class="t" style="left:543.52px;top:355.59px;font-size:13.6px;color:#8a8a8a;transform:scaleX(0.9847);"><u>M</u>ore Colors...</div>
<svg class="a" style="left:521px;top:382px;" width="15.5" height="15" viewBox="0 0 15.5 15"><path d="M0.800 14.200l1-3.200 7.400-7.400 2.400 2.400-7.400 7.400z" fill="none" stroke="#6a6a6a" stroke-width="1.100"/><path d="M8 2.600l4.600 4.600 M9.600 4.400l2.600-2.800c1-0.800 2.600 0.600 1.800 1.800l-2.600 2.800z" fill="#6a6a6a" stroke="#6a6a6a" stroke-width="1"/></svg>
<div class="t" style="left:543.00px;top:382.99px;font-size:13.6px;color:#8a8a8a;">Eyedropper</div>
<div class="a" style="left:0px;top:683.6px;width:1200px;height:1.6px;background:#dadada;"></div>
<div class="a" style="left:0px;top:685px;width:1200px;height:32px;background:#f3f3f3;"></div>
<div class="t" style="left:4.40px;top:696.64px;font-size:12px;color:#555;transform:scaleX(0.9807);">Slide 1 of 1</div>
<svg class="a" style="left:83px;top:696px;" width="14" height="11" viewBox="0 0 14 11"><rect x="0.500" y="0.500" width="11" height="10" fill="none" stroke="#c4c4c4" stroke-width="1"/><path d="M6 0.500v10" stroke="#d4d4d4" stroke-width="1"/><path d="M7.500 4l2 2.200 3.400-4" fill="none" stroke="#b0b0b0" stroke-width="1.100"/></svg>
<svg class="a" style="left:779.5px;top:693.5px;" width="14" height="16" viewBox="0 0 14 16"><path d="M3.400 4.400L7 0.600l3.600 3.800z" fill="#555"/><path d="M0.400 6.800h13.200 M0.400 9.600h13.200 M0.400 12.400h13.200 M0.400 15.200h13.200" stroke="#666" stroke-width="1.100"/></svg>
<div class="t" style="left:799.51px;top:696.50px;font-size:12.4px;color:#555;transform:scaleX(0.9912);">Notes</div>
<div class="a" style="left:847px;top:685px;width:32.2px;height:32px;background:#c8c8c8;"></div>
<svg class="a" style="left:856px;top:695.5px;" width="16" height="13.5" viewBox="0 0 16 13.5"><rect x="0.500" y="0.500" width="15" height="12.500" fill="#bdbdbd" stroke="#a9a9a9" stroke-width="1"/><path d="M5.400 0.500v12.500 M10.400 0.500v9 M5.400 9.500h10" stroke="#a9a9a9" stroke-width="1"/></svg>
<svg class="a" style="left:889px;top:696px;" width="13" height="12.5" viewBox="0 0 13 12.5"><path d="M0.500 0.500h12v11.500h-12z M4.500 0.500v11.500 M8.500 0.500v11.500 M0.500 4.300h12 M0.500 8.200h12" fill="none" stroke="#c6c6c6" stroke-width="1"/></svg>
<svg class="a" style="left:921px;top:696px;" width="14" height="12.5" viewBox="0 0 14 12.5"><rect x="0.500" y="0.500" width="13" height="11.500" fill="#d6d6d6" stroke="#c4c4c4" stroke-width="1"/><path d="M7 0.500v11.500" stroke="#eaeaea" stroke-width="1"/></svg>
<svg class="a" style="left:953.5px;top:695.5px;" width="14" height="13.5" viewBox="0 0 14 13.5"><path d="M0.300 0.800h13.400" stroke="#777" stroke-width="1.400"/><path d="M1.600 1.400v6.400h10.800V1.400 M7 7.800v4.800 M4.400 12.800h5.200" fill="none" stroke="#8a8a8a" stroke-width="1.100"/></svg>
<div class="a" style="left:981.5px;top:701px;width:8px;height:1.8px;background:#555;"></div>
<div class="a" style="left:993.4px;top:701.4px;width:114.6px;height:1px;background:#b8b8b8;"></div>
<div class="a" style="left:1050px;top:698px;width:1px;height:8px;background:#c0c0c0;"></div>
<div class="a" style="left:1022.8px;top:696px;width:5.2px;height:12px;background:#666;"></div>
<svg class="a" style="left:1111px;top:698px;" width="8" height="8.4" viewBox="0 0 8 8.4"><path d="M4 0v8.400 M0 4.200h8" stroke="#444" stroke-width="1.700"/></svg>
<div class="t" style="left:1128.50px;top:696.44px;font-size:12px;color:#555;transform:scaleX(0.9446);">59%</div>
<svg class="a" style="left:1168px;top:696.5px;" width="11.5" height="11.5" viewBox="0 0 11.5 11.5"><path d="M5.700 0.400v3 M5.700 8v3 M0.400 5.700h3 M8 5.700h3" stroke="#999" stroke-width="1.200"/><path d="M4 2.400l1.700 1.800 1.700-1.800z M4 9l1.700-1.800 1.700 1.800z M2.400 4l1.800 1.700-1.800 1.700z M9 4l-1.800 1.700 1.800 1.700z" fill="#999"/></svg>
</body></html>
